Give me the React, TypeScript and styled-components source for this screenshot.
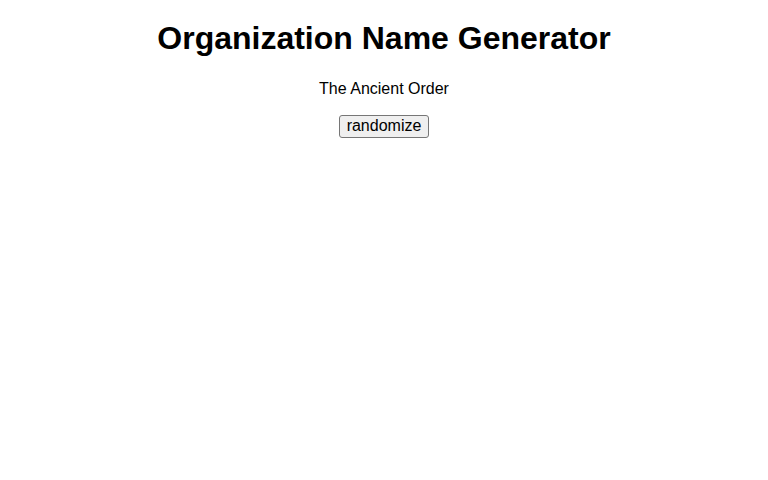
import React, { useState } from 'react';
import styled, { createGlobalStyle } from 'styled-components';

const GlobalStyle = createGlobalStyle`
  body {
    margin: 8px;
    font-family: "Liberation Sans", Arial, sans-serif;
    color: #000;
    background: #fff;
  }
`;

const Page = styled.main`
  text-align: center;
`;

const Title = styled.h1`
  font-size: 32px;
  font-weight: bold;
  margin: 12px 0 23px;
`;

const OrgName = styled.p`
  font-size: 16px;
  margin: 16px 0 17px;
`;

const RandomButton = styled.button`
  font-family: inherit;
  font-size: 16px;
  color: #000;
  background: #efefef;
  border: 1px solid #767676;
  border-radius: 3px;
  padding: 1px 7px 2px;
  cursor: pointer;
`;

const names = [
  'The Ancient Order',
  'The Silver Circle',
  'The Crimson Guild',
  'The Hidden Hand',
  'The Iron Brotherhood',
];

export default function App() {
  const [name, setName] = useState(names[0]);

  const randomize = () => {
    setName(names[Math.floor(Math.random() * names.length)]);
  };

  return (
    <Page>
      <GlobalStyle />
      <Title>Organization Name Generator</Title>
      <OrgName>{name}</OrgName>
      <RandomButton onClick={randomize}>randomize</RandomButton>
    </Page>
  );
}
